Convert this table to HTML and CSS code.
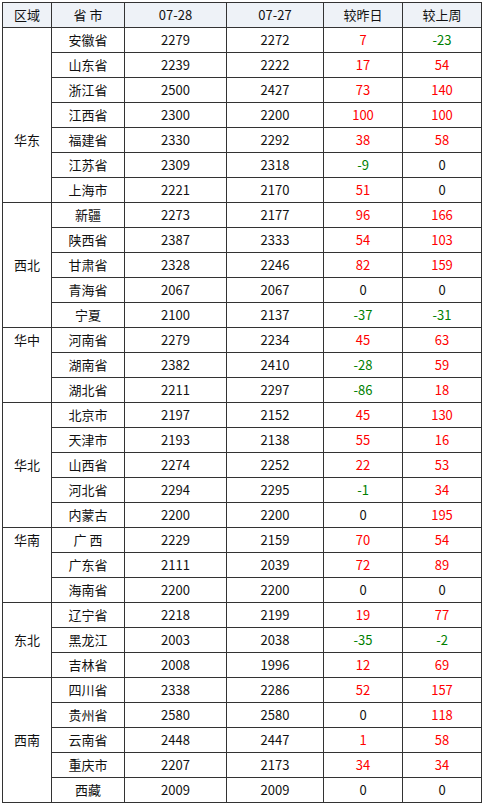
FILE: index.html
```html
<!DOCTYPE html>
<html lang="zh">
<head>
<meta charset="utf-8">
<link rel="stylesheet" href="styles.css">
</head>
<body>
<table class="price-table">
<colgroup>
<col class="c-region"><col class="c-prov"><col class="c-d1"><col class="c-d2"><col class="c-chg"><col class="c-chg">
</colgroup>
<thead>
<tr><th>区域</th><th>省 市</th><th>07-28</th><th>07-27</th><th>较昨日</th><th>较上周</th></tr>
</thead>
<tbody>
<tr><td class="region region-low" rowspan="7">华东</td><td>安徽省</td><td>2279</td><td>2272</td><td class="up">7</td><td class="down">-23</td></tr>
<tr><td>山东省</td><td>2239</td><td>2222</td><td class="up">17</td><td class="up">54</td></tr>
<tr><td>浙江省</td><td>2500</td><td>2427</td><td class="up">73</td><td class="up">140</td></tr>
<tr><td>江西省</td><td>2300</td><td>2200</td><td class="up">100</td><td class="up">100</td></tr>
<tr><td>福建省</td><td>2330</td><td>2292</td><td class="up">38</td><td class="up">58</td></tr>
<tr><td>江苏省</td><td>2309</td><td>2318</td><td class="down">-9</td><td>0</td></tr>
<tr><td>上海市</td><td>2221</td><td>2170</td><td class="up">51</td><td>0</td></tr>

<tr><td class="region" rowspan="5">西北</td><td>新疆</td><td>2273</td><td>2177</td><td class="up">96</td><td class="up">166</td></tr>
<tr><td>陕西省</td><td>2387</td><td>2333</td><td class="up">54</td><td class="up">103</td></tr>
<tr><td>甘肃省</td><td>2328</td><td>2246</td><td class="up">82</td><td class="up">159</td></tr>
<tr><td>青海省</td><td>2067</td><td>2067</td><td>0</td><td>0</td></tr>
<tr><td>宁夏</td><td>2100</td><td>2137</td><td class="down">-37</td><td class="down">-31</td></tr>

<tr><td class="region region-high" rowspan="3">华中</td><td>河南省</td><td>2279</td><td>2234</td><td class="up">45</td><td class="up">63</td></tr>
<tr><td>湖南省</td><td>2382</td><td>2410</td><td class="down">-28</td><td class="up">59</td></tr>
<tr><td>湖北省</td><td>2211</td><td>2297</td><td class="down">-86</td><td class="up">18</td></tr>

<tr><td class="region" rowspan="5">华北</td><td>北京市</td><td>2197</td><td>2152</td><td class="up">45</td><td class="up">130</td></tr>
<tr><td>天津市</td><td>2193</td><td>2138</td><td class="up">55</td><td class="up">16</td></tr>
<tr><td>山西省</td><td>2274</td><td>2252</td><td class="up">22</td><td class="up">53</td></tr>
<tr><td>河北省</td><td>2294</td><td>2295</td><td class="down">-1</td><td class="up">34</td></tr>
<tr><td>内蒙古</td><td>2200</td><td>2200</td><td>0</td><td class="up">195</td></tr>

<tr><td class="region region-high" rowspan="3">华南</td><td>广 西</td><td>2229</td><td>2159</td><td class="up">70</td><td class="up">54</td></tr>
<tr><td>广东省</td><td>2111</td><td>2039</td><td class="up">72</td><td class="up">89</td></tr>
<tr><td>海南省</td><td>2200</td><td>2200</td><td>0</td><td>0</td></tr>

<tr><td class="region" rowspan="3">东北</td><td>辽宁省</td><td>2218</td><td>2199</td><td class="up">19</td><td class="up">77</td></tr>
<tr><td>黑龙江</td><td>2003</td><td>2038</td><td class="down">-35</td><td class="down">-2</td></tr>
<tr><td>吉林省</td><td>2008</td><td>1996</td><td class="up">12</td><td class="up">69</td></tr>

<tr><td class="region" rowspan="5">西南</td><td>四川省</td><td>2338</td><td>2286</td><td class="up">52</td><td class="up">157</td></tr>
<tr><td>贵州省</td><td>2580</td><td>2580</td><td>0</td><td class="up">118</td></tr>
<tr><td>云南省</td><td>2448</td><td>2447</td><td class="up">1</td><td class="up">58</td></tr>
<tr><td>重庆市</td><td>2207</td><td>2173</td><td class="up">34</td><td class="up">34</td></tr>
<tr><td>西藏</td><td>2009</td><td>2009</td><td>0</td><td>0</td></tr>
</tbody>
</table>
</body>
</html>
```

FILE: styles.css
```css
html, body {
  margin: 0;
  padding: 0;
  background: #ffffff;
}

.price-table {
  margin: 2px 0 0 2px;
  width: 480px;
  table-layout: fixed;
  border-collapse: collapse;
  font-family: "Noto Sans CJK SC", "DejaVu Sans", sans-serif;
  font-size: 13px;
  color: #111111;
}

.c-region { width: 49px; }
.c-prov { width: 73px; }
.c-d1 { width: 102px; }
.c-d2 { width: 97px; }
.c-chg { width: 79px; }

.price-table th,
.price-table td {
  border: 1px solid #333333;
  padding: 0;
  height: 24px;
  line-height: 24px;
  text-align: center;
  vertical-align: middle;
  font-weight: normal;
  white-space: nowrap;
}

.price-table th {
  background: #eef2f7;
}

.price-table td.region-low {
  padding-top: 50px;
}

.price-table td.region-high {
  padding-bottom: 50px;
}

.price-table .up { color: #ff0000; }
.price-table .down { color: #008000; }
```
